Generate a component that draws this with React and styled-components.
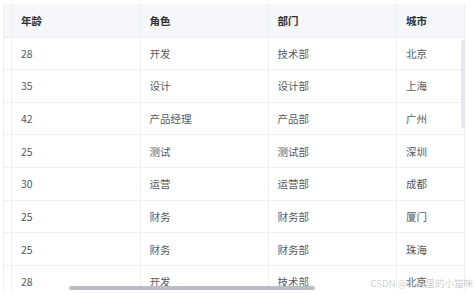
import React from 'react'
import styled, { createGlobalStyle } from 'styled-components';

const GlobalStyle = createGlobalStyle`
  html, body { margin: 0; padding: 0; background: #ffffff; }
  body { font-family: 'Noto Sans CJK SC', 'Liberation Sans', sans-serif; }
`;

const columns = ['', '年龄', '角色', '部门', '城市'];

const rows = [
  ['', '28', '开发', '技术部', '北京'],
  ['', '35', '设计', '设计部', '上海'],
  ['', '42', '产品经理', '产品部', '广州'],
  ['', '25', '测试', '测试部', '深圳'],
  ['', '30', '运营', '运营部', '成都'],
  ['', '25', '财务', '财务部', '厦门'],
  ['', '25', '财务', '财务部', '珠海'],
  ['', '28', '开发', '技术部', '北京'],
];

function App() {
  return (
    <Page>
      <GlobalStyle />
      <Viewport>
        <Grid>
          {columns.map((c, i) => (
            <HeadCell key={i} $first={i === 0}>{c}</HeadCell>
          ))}
          {rows.map((r, ri) =>
            r.map((c, ci) => (
              <Cell key={ri + '-' + ci} $first={ci === 0}>{c}</Cell>
            ))
          )}
        </Grid>
        <VThumb />
        <HThumb />
      </Viewport>
      <Watermark>CSDN @代码里的小猫咪</Watermark>
    </Page>
  )
}

const Page = styled.div`
  position: relative;
  width: 474px;
  height: 294px;
  padding: 4px 0 0 3px;
  box-sizing: border-box;
  overflow: hidden;
`;

const Viewport = styled.div`
  position: relative;
  width: 462px;
  height: 286px;
  overflow: hidden;
  border-left: 1px solid #ebeef5;
  box-sizing: border-box;
`;

const Grid = styled.div`
  display: grid;
  grid-template-columns: 8px 128.5px 128px 128.5px 1fr;
  grid-template-rows: 33.5px;
  grid-auto-rows: 32.67px;
`;

const HeadCell = styled.div`
  display: flex;
  align-items: center;
  padding-left: ${p => (p.$first ? 0 : 9)}px;
  background: #f5f7fa;
  border-bottom: 1px solid #ebeef5;
  border-right: 1px solid #ebeef5;
  box-sizing: border-box;
  font-size: 10.5px;
  font-weight: 700;
  color: #303133;
`;

const Cell = styled.div`
  display: flex;
  align-items: center;
  padding-left: ${p => (p.$first ? 0 : 9)}px;
  background: #ffffff;
  border-bottom: 1px solid #ebeef5;
  border-right: 1px solid #ebeef5;
  box-sizing: border-box;
  font-size: 10.5px;
  color: #555a62;
  white-space: nowrap;
`;

const VThumb = styled.div`
  position: absolute;
  left: 457px;
  top: 36px;
  width: 4px;
  height: 88px;
  border-radius: 2px;
  background: #e4e7ed;
`;

const HThumb = styled.div`
  position: absolute;
  left: 65px;
  top: 282px;
  width: 246px;
  height: 4px;
  border-radius: 2px;
  background: #b9bdc4;
`;

const Watermark = styled.div`
  position: absolute;
  right: 1px;
  bottom: 4px;
  font-size: 9.5px;
  color: rgba(190, 190, 190, 0.75);
  white-space: nowrap;
`;

export default App
